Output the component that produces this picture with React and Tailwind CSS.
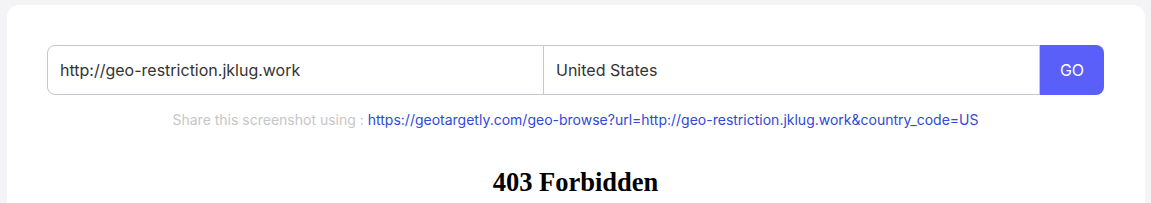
export default function App() {
  return (
    <div className="h-[203px] overflow-hidden bg-[#f4f4f6] pt-[5px] pl-[7px] pr-[6px]" style={{ fontFamily: "Inter, 'Noto Sans', sans-serif" }}>
      <div className="bg-white rounded-t-[12px] pl-10 pr-[41px] pt-10 pb-6">
        <div className="flex h-[50px]">
          <div className="flex-1 flex items-center border border-[#c3c6d3] rounded-l-[8px] pl-3 text-[16px] text-[#333]">
            http://geo-restriction.jklug.work
          </div>
          <div className="flex-1 flex items-center border-y border-r border-[#c3c6d3] pl-3 text-[16px] text-[#333]">
            United States
          </div>
          <button className="w-[64px] bg-[#5a5ffa] text-white text-[16px] rounded-r-[8px]">GO</button>
        </div>
        <div className="mt-[15px] text-center text-[14px] leading-5">
          <span className="text-[#c6c6c6]">Share this screenshot using : </span>
          <span className="text-[#2f49d8]">https://geotargetly.com/geo-browse?url=http://geo-restriction.jklug.work&amp;country_code=US</span>
        </div>
        <h1 className="mt-[36px] text-center text-[26.5px] font-bold text-black leading-8" style={{ fontFamily: "'Liberation Serif', serif" }}>
          403 Forbidden
        </h1>
      </div>
    </div>
  );
}
